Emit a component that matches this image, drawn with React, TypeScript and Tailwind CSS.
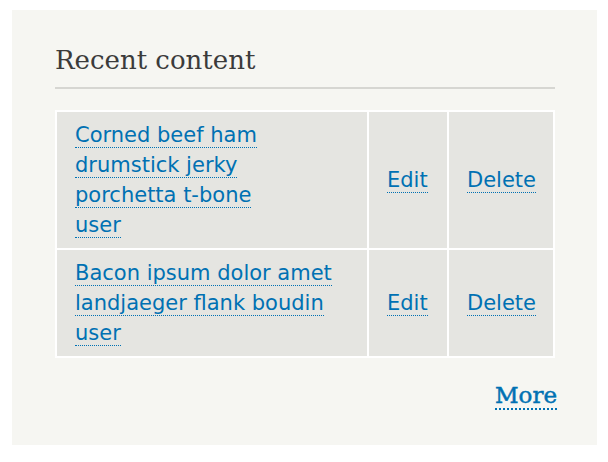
const rows = [
  { title: ['Corned beef ham', 'drumstick jerky', 'porchetta t-bone'], author: 'user' },
  { title: ['Bacon ipsum dolor amet', 'landjaeger flank boudin'], author: 'user' },
]

const link =
  'text-[#0071b3] border-b-[1.5px] border-dotted border-[#0071b3] no-underline'

export default function App() {
  return (
    <div className="min-h-[462px] bg-white pl-[12px] pt-[10px] font-['DejaVu_Sans',sans-serif]">
      <section className="h-[435px] w-[585px] bg-[#f6f6f2] pl-[43px] pr-[42px] pt-[35px]">
        <h2 className="border-b-2 border-[#d6d6d2] pb-[12px] font-['DejaVu_Serif',serif] text-[26px] leading-[30px] text-[#3b3b3b]">
          Recent content
        </h2>
        <table className="mt-[21px] w-[498px] table-fixed border-collapse text-[21px] leading-[30px]">
          <colgroup>
            <col className="w-[312px]" />
            <col className="w-[80px]" />
            <col className="w-[106px]" />
          </colgroup>
          <tbody>
            {rows.map((row, i) => (
              <tr key={i} className="bg-[#e5e5e1]">
                <td className="border-2 border-white px-[18px] py-[8px] align-top">
                  <div>
                    {row.title.map((line) => (
                      <div key={line}>
                        <a href="#" className={link}>{line}</a>
                      </div>
                    ))}
                    <div>
                      <a href="#" className={link}>{row.author}</a>
                    </div>
                  </div>
                </td>
                <td className="border-2 border-white px-[18px]">
                  <a href="#" className={link}>Edit</a>
                </td>
                <td className="border-2 border-white px-[18px]">
                  <a href="#" className={link}>Delete</a>
                </td>
              </tr>
            ))}
          </tbody>
        </table>
        <div className="-mr-[2px] mt-[22px] text-right font-['DejaVu_Serif',serif] text-[23px] leading-[30px] [-webkit-text-stroke:0.5px_#0071b3]">
          <a href="#" className="border-b-2 border-dotted border-[#0071b3] text-[#0071b3] no-underline">More</a>
        </div>
      </section>
    </div>
  )
}
